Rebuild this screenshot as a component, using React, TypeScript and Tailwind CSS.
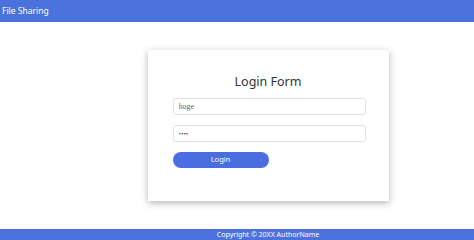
export default function App() {
  return (
    <div className="flex h-[240px] flex-col bg-white font-['Noto_Sans',sans-serif]">
      <header className="flex h-[22px] items-center bg-[#4b72dc] px-[2px] text-[8.5px] text-white">
        File Sharing
      </header>

      <main className="flex flex-1 items-start justify-center pl-[62px] pt-[28px]">
        <div className="flex w-[241px] flex-col bg-white px-[25px] pb-[33px] pt-[22px] shadow-[0_2px_7px_rgba(0,0,0,0.3)]">
          <h1 className="text-center text-[12.5px] leading-[20px] text-[#333]">Login Form</h1>
          <form className="mt-[6px] flex flex-col gap-[10px]" onSubmit={(e) => e.preventDefault()}>
            <input
              type="text"
              defaultValue="hoge"
              className="h-[17px] w-[193px] rounded-[3px] border border-[#e2e2e2] px-[5px] font-['Liberation_Serif',serif] text-[8px] text-[#666] outline-none"
            />
            <input
              type="password"
              defaultValue="hoge"
              className="h-[17px] w-[193px] rounded-[3px] border border-[#e2e2e2] px-[5px] font-['Liberation_Serif',serif] text-[7px] text-[#555] outline-none"
            />
            <button
              type="submit"
              className="h-[16px] w-[96px] rounded-full bg-[#4a6ee0] text-[7.5px] leading-none text-white"
            >
              Login
            </button>
          </form>
        </div>
      </main>

      <footer className="flex h-[11px] items-center justify-center bg-[#4b72dc] pl-[62px] text-[7px] leading-none text-white">
        Copyright © 20XX AuthorName
      </footer>
    </div>
  );
}
